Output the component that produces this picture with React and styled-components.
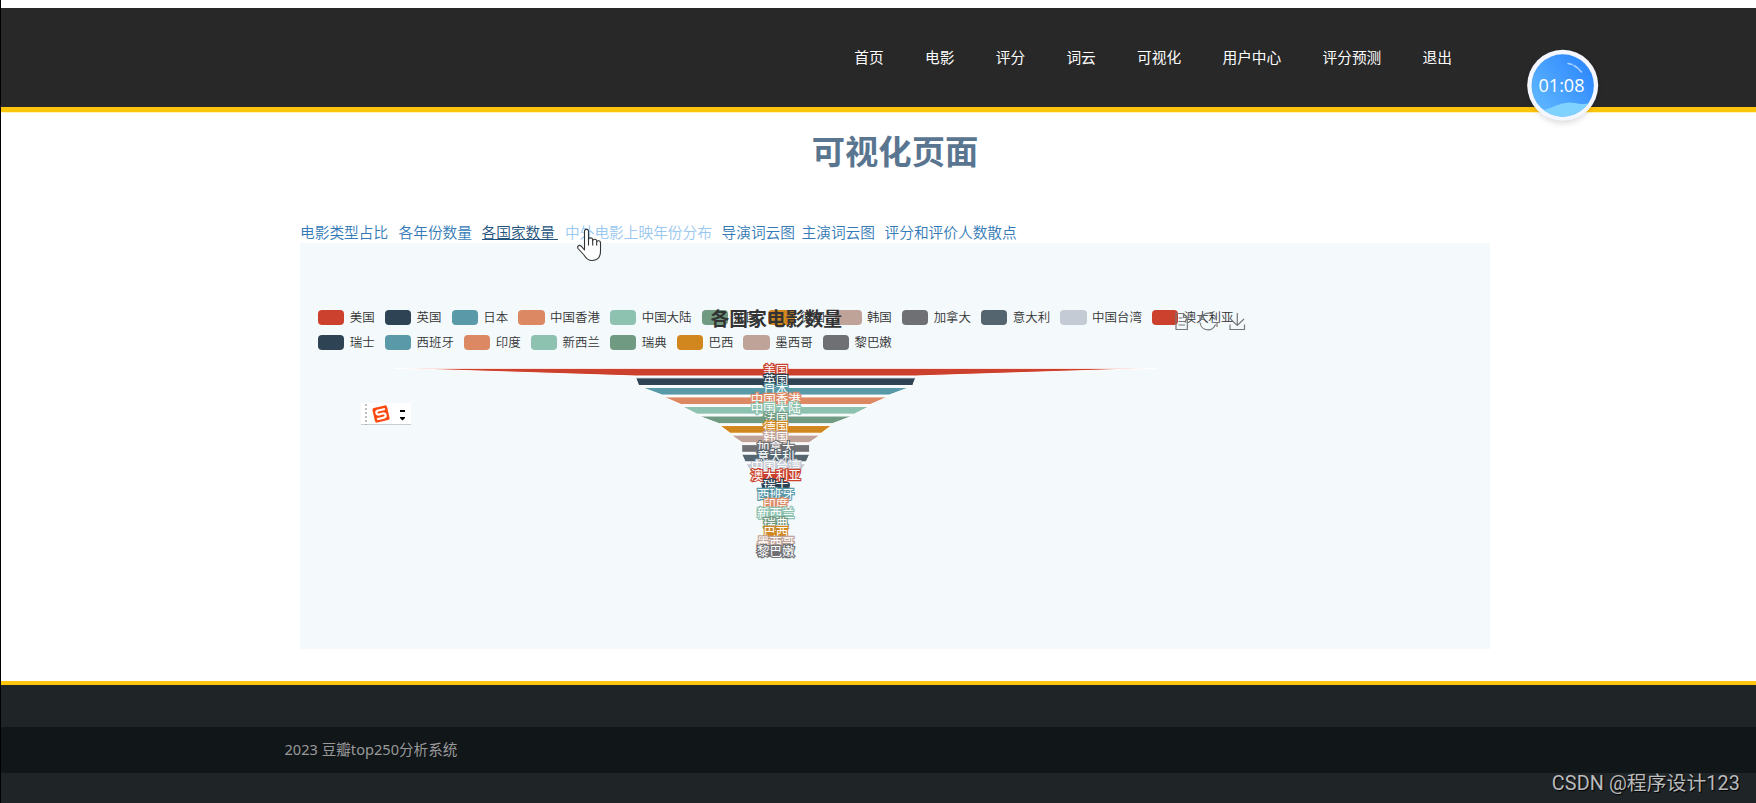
import React from "react";
import styled, { createGlobalStyle } from "styled-components";

const GlobalStyle = createGlobalStyle`
  * { box-sizing: border-box; }
  body {
    margin: 0;
    background: #fff;
    font-family: "Noto Sans", "Noto Sans CJK SC", sans-serif;
    overflow: hidden;
  }
`;

const cjk = `"Noto Sans CJK SC", sans-serif`;

const Page = styled.div`
  position: relative;
  display: flex;
  flex-direction: column;
  height: 803px;
  border-left: 1px solid #000;
  padding-top: 8px;
  overflow: hidden;
`;

const Header = styled.header`
  flex: none;
  display: flex;
  justify-content: flex-end;
  height: 104px;
  padding: 39px 304px 0 0;
  background: #282828;
  border-bottom: 5px solid #ffc40c;
  box-shadow: 0 1px 0 #fff3b8;
`;

const Nav = styled.nav`
  display: flex;
  gap: 41.3px;
  font-family: ${cjk};
`;

const NavLink = styled.a`
  font-size: 14.7px;
  line-height: 20px;
  color: #fff;
  white-space: nowrap;
`;

const Main = styled.main`
  flex: none;
  display: flex;
  flex-direction: column;
  width: 1190px;
  height: 569px;
  margin-left: 299px;
`;

const Heading = styled.h1`
  margin: 18px 0 0;
  height: 40px;
  font: 700 33.3px/40px ${cjk};
  color: #5a7590;
  text-align: center;
`;

const Tabs = styled.div`
  display: flex;
  height: 20px;
  margin-top: 52px;
  font: 350 14.7px/20px ${cjk};
`;

const Tab = styled.a`
  flex: none;
  width: ${(p) => p.$w}px;
  color: ${(p) => p.$color || "#337ab7"};
  white-space: nowrap;
  span {
    display: inline-block;
    height: 18px;
    border-bottom: ${(p) => (p.$active ? "1px solid #23527c" : "0")};
    padding-right: ${(p) => (p.$active ? "3px" : "0")};
  }
`;

const Panel = styled.section`
  position: relative;
  height: 406px;
  margin-top: 1px;
  padding: 67px 0 0 18px;
  background: #f4f9fc;
`;

const Legend = styled.div`
  display: flex;
  flex-wrap: wrap;
  width: 940px;
  gap: 9.9px 10.1px;
`;

const LegendItem = styled.div`
  display: flex;
  align-items: center;
  gap: 5.4px;
  height: 15.3px;
  font: 350 12.45px/15px ${cjk};
  color: #333;
  white-space: nowrap;
`;

const Swatch = styled.i`
  width: 26.4px;
  height: 15px;
  border-radius: 4px;
  background: ${(p) => p.$color};
`;

const ChartTitle = styled.h2`
  position: absolute;
  left: 410.5px;
  top: 63px;
  margin: 0;
  font: 700 18.8px/24px ${cjk};
  color: #333;
`;

const Toolbox = styled.div`
  position: absolute;
  left: 875px;
  top: 67px;
  svg { display: block; }
`;

const Funnel = styled.svg`
  position: absolute;
  left: 1px;
  top: 112.5px;
  font: 400 12.5px ${cjk};
`;

const Ime = styled.div`
  position: absolute;
  left: 61px;
  top: 160px;
  svg { display: block; }
`;

const Footer = styled.footer`
  flex: 1;
  display: flex;
  flex-direction: column;
  padding-top: 42px;
  border-top: 4px solid #ffc40c;
  background: #1f2427;
`;

const Copyright = styled.div`
  height: 46px;
  padding-left: 283.5px;
  background: #111619;
  color: #999;
  font-size: 14.6px;
  line-height: 45px;
`;

const Watermark = styled.div`
  position: absolute;
  right: 16px;
  bottom: 4px;
  font: 400 19.8px/30px Roboto, "Noto Sans CJK SC", sans-serif;
  letter-spacing: 0.1px;
  color: #b9bbbc;
  text-shadow: 1px 1px 1px #000;
  white-space: nowrap;
`;

const Clock = styled.svg`
  position: absolute;
  left: 1516px;
  top: 39.5px;
`;

const Cursor = styled.svg`
  position: absolute;
  left: 574px;
  top: 227.5px;
`;

const nav = ["首页", "电影", "评分", "词云", "可视化", "用户中心", "评分预测", "退出"];

const tabs = [
  { label: "电影类型占比", w: 98.5 },
  { label: "各年份数量", w: 83 },
  { label: "各国家数量", w: 83.5, color: "#23527c", active: true },
  { label: "中外电影上映年份分布", w: 156.5, color: "#99c7ef" },
  { label: "导演词云图", w: 80 },
  { label: "主演词云图", w: 83 },
  { label: "评分和评价人数散点", w: 140 },
];

const palette = [
  "#cb412d", "#2e4454", "#5a9aa8", "#dc8863", "#8ec2b0", "#709a82",
  "#d2871e", "#c0a398", "#6e7074", "#546570", "#c5cbd4",
];

// Country name with the half width of its funnel slice at the top and bottom.
const slices = [
  ["美国", 381, 140], ["英国", 140, 137], ["日本", 134, 113.5], ["中国香港", 112, 94.5],
  ["中国大陆", 94, 78.5], ["法国", 77, 56.5], ["德国", 56, 45.5], ["韩国", 44.5, 33.5],
  ["加拿大", 34, 34], ["意大利", 34, 30.5], ["中国台湾", 30, 25], ["澳大利亚", 23, 17],
  ["瑞士", 15, 14], ["西班牙", 13, 12], ["印度", 11, 10], ["新西兰", 9, 9],
  ["瑞典", 9, 9], ["巴西", 9, 9], ["墨西哥", 9, 9], ["黎巴嫩", 9, 9],
];

const STEP = 9.54;
const CX = 474.7;

export default function App() {
  return (
    <>
      <GlobalStyle />
      <Page>
        <Header>
          <Nav>{nav.map((n) => <NavLink key={n}>{n}</NavLink>)}</Nav>
        </Header>
        <Main>
          <Heading>可视化页面</Heading>
          <Tabs>
            {tabs.map((t) => (
              <Tab key={t.label} $w={t.w} $color={t.color} $active={t.active}>
                <span>{t.label}</span>
              </Tab>
            ))}
          </Tabs>
          <Panel>
            <Legend>
              {slices.map(([name], i) => (
                <LegendItem key={name}>
                  <Swatch $color={palette[i % 11]} />
                  {name}
                </LegendItem>
              ))}
            </Legend>
            <ChartTitle>各国家电影数量</ChartTitle>
            <Toolbox>
              <svg width="72" height="22" fill="none" stroke="#777" strokeWidth="1.2">
                <path d="M1 3.5h7.5l3.8 4v12H1zM8.5 3.5v4h3.8M3.5 8h4M3.5 11.5h6.5M3.5 15h6.5" />
                <path d="M25 12.5a8 8 0 0 0 15.500 2M41.500 10.500a8 8 0 0 0-15.500-2M25 5v4.500h4M42 17v-4.500h-4" />
                <path d="M55 14.500v5h14.500v-5M62.300 3v12.500M55.500 9l6.800 6.500L69 9" />
              </svg>
            </Toolbox>
            <Funnel width="1000" height="220">
              {slices.map(([name, a, b], i) => {
                const y = 12.3 + i * STEP;
                return (
                  <polygon
                    key={name}
                    points={`${CX - a},${y} ${CX + a},${y} ${CX + b},${y + 7.7} ${CX - b},${y + 7.7}`}
                    fill={palette[i % 11]}
                    stroke="#fff"
                    strokeWidth="1"
                  />
                );
              })}
              {slices.map(([name], i) => (
                <text
                  key={name}
                  x={CX}
                  y={19.2 + i * STEP}
                  textAnchor="middle"
                  fill="#fff"
                  stroke={palette[i % 11]}
                  strokeWidth="2.3"
                  paintOrder="stroke"
                >
                  {name}
                </text>
              ))}
            </Funnel>
            <Ime>
              <svg width="50" height="23">
                <path d="M0 0h50v21H0z" fill="#fff" />
                <path d="M0 21.500h50" stroke="#ccc" />
                <path d="M5 1v21" stroke="#aaa" strokeWidth="1.500" strokeDasharray="2 2" />
                <g transform="rotate(-13 20 11)">
                  <rect x="12.500" y="3.500" width="15" height="15" rx="2" fill="#fb4a10" />
                  <path d="M25 7h-7c-3 0-3 4 0 4h4c3 0 3 4.200 0 4.200h-7" fill="none" stroke="#fff" strokeWidth="2.200" />
                </g>
                <path d="M39 7h5v2h-5zM39 14h5v1l-2.500 2.500L39 15z" fill="#000" />
              </svg>
            </Ime>
          </Panel>
        </Main>
        <Footer>
          <Copyright>2023 豆瓣top250分析系统</Copyright>
        </Footer>
        <Clock width="92" height="92">
          <defs>
            <linearGradient id="ball" x1="0" y1="1" x2="1" y2="0.2">
              <stop offset="0" stopColor="#66bdff" />
              <stop offset="1" stopColor="#2b86fd" />
            </linearGradient>
            <filter id="shade" x="-30%" y="-30%" width="160%" height="160%">
              <feGaussianBlur stdDeviation="3" />
            </filter>
            <clipPath id="inner"><circle cx="45.700" cy="45.500" r="31.200" /></clipPath>
          </defs>
          <circle cx="45.700" cy="49" r="34" fill="#000" opacity="0.15" filter="url(#shade)" />
          <circle cx="45.700" cy="45.300" r="35.500" fill="#f4f7ff" />
          <circle cx="45.700" cy="45.500" r="31.200" fill="url(#ball)" />
          <path clipPath="url(#inner)" d="M14 72q14-1 24-6t20-3q8 2 16 0v20H14z" fill="#80d2fe" />
          <path d="M51 23.500l4 1M57 25.500q4 2 7.500 6.500" stroke="#a9d2ff" strokeWidth="1.600" fill="none" strokeLinecap="round" />
          <text x="21.500" y="52" textLength="46" lengthAdjust="spacingAndGlyphs" fontFamily="Open Sans, Noto Sans, sans-serif" fontWeight="400" fontSize="19" fill="#fff">01:08</text>
        </Clock>
        <Cursor width="30" height="36" viewBox="0 0 30 36">
          <path
            d="M9.500 19.500V3.500c0-3 4-3 4 0v8c0-2.200 4-2.200 4.200 0v1c.3-1.800 3.800-1.800 4 .3v1c.4-1.700 3.800-1.400 3.800 1V23c0 6-3 9.500-8.500 9.500-4 0-6-2-8-5.500L3 20.500c-1.200-2.500 1.500-4 3.200-2.300L9.500 22z"
            fill="#fff" stroke="#333" strokeWidth="1.100" strokeLinejoin="round"
          />
          <path d="M13.500 11v6.500M17.700 12v5.500M21.700 13.500v4" stroke="#333" strokeWidth="1.100" />
        </Cursor>
        <Watermark>CSDN @程序设计123</Watermark>
      </Page>
    </>
  );
}
